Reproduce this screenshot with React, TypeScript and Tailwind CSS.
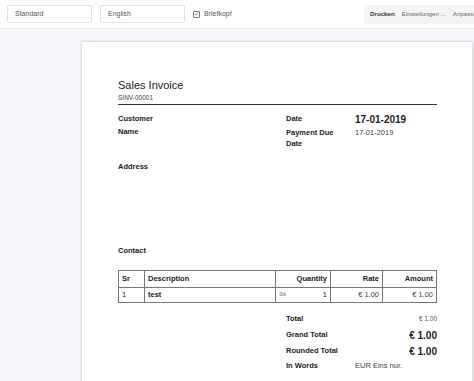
import React from "react";

const items = [{ sr: 1, description: "test", uom: "Stk", qty: 1, rate: "€ 1.00", amount: "€ 1.00" }];

const App: React.FC = () => {
  return (
    <div className="w-[474px] h-[381px] overflow-hidden bg-[#f6f7fa] font-['Liberation_Sans',Arial,sans-serif]">
      {/* Toolbar */}
      <div className="h-[29px] bg-white border-b border-[#e8eaed] flex items-center px-[7px] text-[7px] text-[#555] overflow-hidden">
        <div className="w-[85px] h-[18px] border border-[#dfe2e6] rounded-[2px] flex items-center pl-[7px]">Standard</div>
        <div className="w-[85px] h-[18px] border border-[#dfe2e6] rounded-[2px] flex items-center pl-[7px] ml-[8px]">English</div>
        <div className="flex items-center ml-[8px] gap-[4px]">
          <span className="w-[7px] h-[7px] border border-[#777] rounded-[1px] flex items-center justify-center">
            <svg viewBox="0 0 8 8" className="w-[6px] h-[6px]">
              <path d="M1.5 4.2 L3.2 5.8 L6.5 2" fill="none" stroke="#444" strokeWidth="1" />
            </svg>
          </span>
          <span>Briefkopf</span>
        </div>
        <div className="ml-auto -mr-[47px] w-[150px] shrink-0 h-[19px] bg-[#f3f4f6] flex items-center pl-[6px] gap-[7px] rounded-l-[2px] whitespace-nowrap text-[6.2px]">
          <span className="font-bold text-[#333]">Drucken</span>
          <span className="text-[#666]">Einstellungen ...</span>
          <span className="text-[#666]">Anpassen</span>
        </div>
      </div>

      {/* Paper */}
      <div className="ml-[82px] mt-[13px] w-[390px] h-[360px] bg-white shadow-[0_0_3px_rgba(0,0,0,0.25)] pl-[36px] pr-[35px] pt-[36px] text-[#222]">
        <div className="text-[11px] leading-[14px] text-[#222]">Sales Invoice</div>
        <div className="text-[6.5px] leading-[9px] mt-[1px] text-[#444]">SINV-00001</div>
        <div className="h-px bg-[#333] mt-[2px]" />

        <div className="flex mt-[9px] text-[7.5px] font-bold">
          <div className="w-[168px]">
            <div className="leading-[10px]">Customer</div>
            <div className="leading-[10px] mt-[3px]">Name</div>
          </div>
          <div className="flex-1">
            <div className="flex items-center h-[10px]">
              <div className="w-[69px]">Date</div>
              <div className="text-[10px]">17-01-2019</div>
            </div>
            <div className="flex mt-[3px]">
              <div className="w-[69px] leading-[11px]">Payment Due<br />Date</div>
              <div className="font-normal text-[#444] leading-[11px]">17-01-2019</div>
            </div>
          </div>
        </div>

        <div className="text-[7.5px] font-bold leading-[10px] mt-[13px]">Address</div>
        <div className="text-[7.5px] font-bold leading-[10px] mt-[74px]">Contact</div>

        <table className="w-full mt-[14px] border-collapse text-[7.5px]">
          <thead>
            <tr className="h-[17px] font-bold">
              <td className="border border-[#777] w-[26px] pl-[3px]">Sr</td>
              <td className="border border-[#777] pl-[3px]">Description</td>
              <td className="border border-[#777] w-[55px] text-right pr-[3px]">Quantity</td>
              <td className="border border-[#777] w-[52px] text-right pr-[3px]">Rate</td>
              <td className="border border-[#777] w-[54px] text-right pr-[3px]">Amount</td>
            </tr>
          </thead>
          <tbody>
            {items.map((it) => (
              <tr key={it.sr} className="h-[15px]">
                <td className="border border-[#777] pl-[3px]">{it.sr}</td>
                <td className="border border-[#777] pl-[3px] font-bold">{it.description}</td>
                <td className="border border-[#777] px-[3px]">
                  <div className="flex items-center justify-between">
                    <span className="text-[5px] text-[#666]">{it.uom}</span>
                    <span>{it.qty}</span>
                  </div>
                </td>
                <td className="border border-[#777] text-right pr-[3px] text-[#444]">{it.rate}</td>
                <td className="border border-[#777] text-right pr-[3px] text-[#444]">{it.amount}</td>
              </tr>
            ))}
          </tbody>
        </table>

        <div className="ml-[168px] mt-[10px] text-[7.5px] font-bold">
          <div className="flex justify-between items-center h-[12px]">
            <span>Total</span>
            <span className="font-normal text-[6.5px] text-[#555]">€ 1.00</span>
          </div>
          <div className="flex justify-between items-center h-[12px] mt-[4px]">
            <span>Grand Total</span>
            <span className="text-[10px]">€ 1.00</span>
          </div>
          <div className="flex justify-between items-center h-[12px] mt-[4px]">
            <span>Rounded Total</span>
            <span className="text-[10px]">€ 1.00</span>
          </div>
          <div className="flex items-center h-[12px] mt-[3px]">
            <span className="w-[69px]">In Words</span>
            <span className="font-normal text-[#444]">EUR Eins nur.</span>
          </div>
        </div>
      </div>
    </div>
  );
};

export default App;
